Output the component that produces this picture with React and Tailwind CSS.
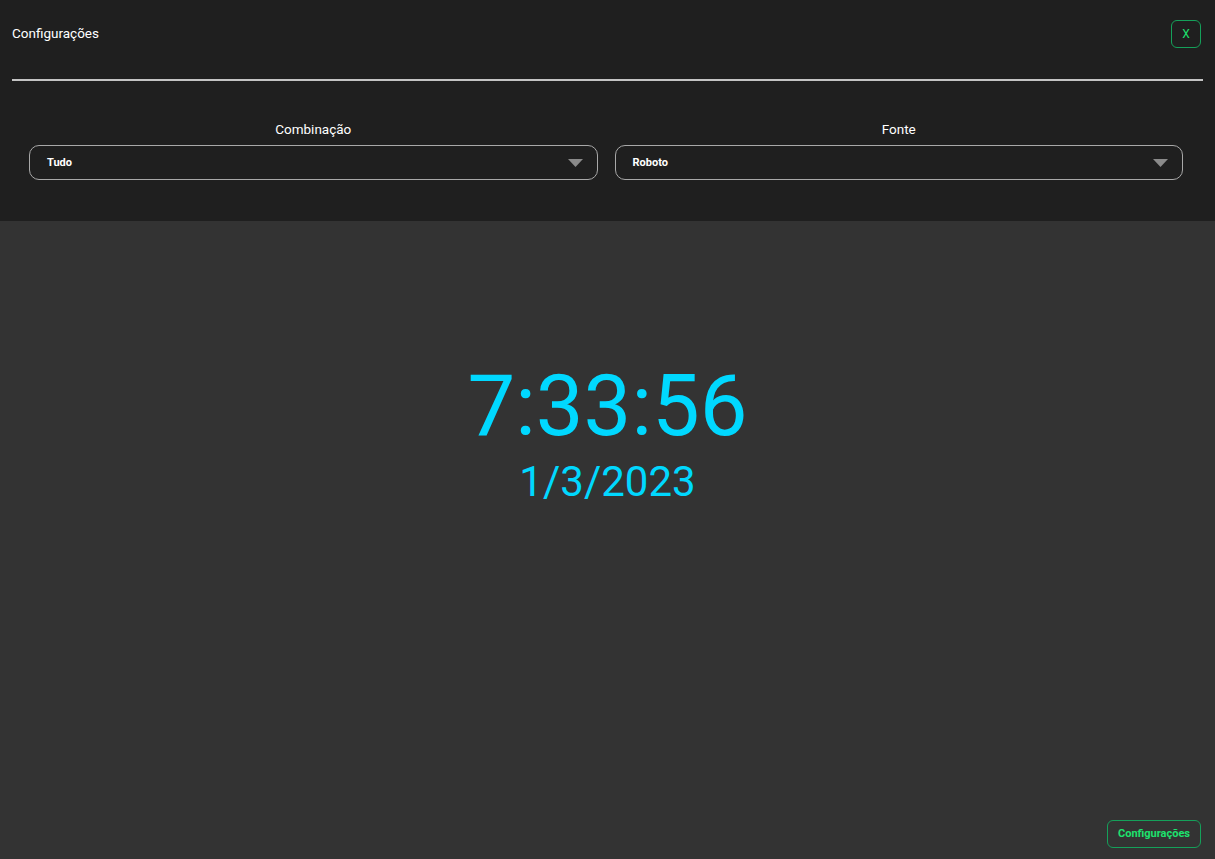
import { useState } from "react";

function Select({ value }) {
  return (
    <div className="relative h-[35px] w-full rounded-[10px] border border-[#a8a8a8] flex items-center pl-[17px] pr-[14px]">
      <span className="text-[11px] font-bold text-white">{value}</span>
      <svg
        className="ml-auto"
        width="15"
        height="8"
        viewBox="0 0 15 8"
        fill="#8a8a8a"
      >
        <path d="M0 0 L15 0 L7.5 8 Z" />
      </svg>
    </div>
  );
}

export default function App() {
  const [open, setOpen] = useState(true);

  return (
    <div
      className="relative h-[859px] w-full overflow-hidden bg-[#333333] flex flex-col items-center justify-center"
      style={{ fontFamily: "Roboto, 'Noto Sans', sans-serif" }}
    >
      {/* CLOCK */}
      <div className="flex flex-col items-center text-[#00d8ff] mt-[10px]">
        <span className="text-[85px] leading-[85px]">7:33:56</span>
        <span className="text-[42px] leading-[46px] mt-[10px]">1/3/2023</span>
      </div>

      {/* SETTINGS PANEL */}
      {open && (
        <div className="absolute top-0 left-0 right-0 h-[221px] bg-[#1f1f1f] px-3">
          <div className="flex items-center justify-between pt-5 h-[48px]">
            <span className="text-[13.5px] text-white -mt-[2px]">Configurações</span>
            <button
              onClick={() => setOpen(false)}
              className="w-[30px] h-[28px] mr-[2px] rounded-md border border-[#15a05a] text-[#1de26e] text-[12px] flex items-center justify-center"
            >
              X
            </button>
          </div>
          <div className="mt-[31px] h-[2px] bg-[#c4c4c4]" />

          <div className="grid grid-cols-2 gap-[17px] pl-[17px] pr-[20px] mt-[38px]">
            <div className="flex flex-col items-center gap-[6px]">
              <span className="text-[13.5px] text-white">Combinação</span>
              <Select value="Tudo" />
            </div>
            <div className="flex flex-col items-center gap-[6px]">
              <span className="text-[13.5px] text-white">Fonte</span>
              <Select value="Roboto" />
            </div>
          </div>
        </div>
      )}

      {/* BOTTOM BUTTON */}
      <button
        onClick={() => setOpen(true)}
        className="absolute right-[14px] bottom-[11px] h-[28px] px-[10px] rounded-md border border-[#15a05a] text-[#1de26e] text-[11px] font-bold"
      >
        Configurações
      </button>
    </div>
  );
}
